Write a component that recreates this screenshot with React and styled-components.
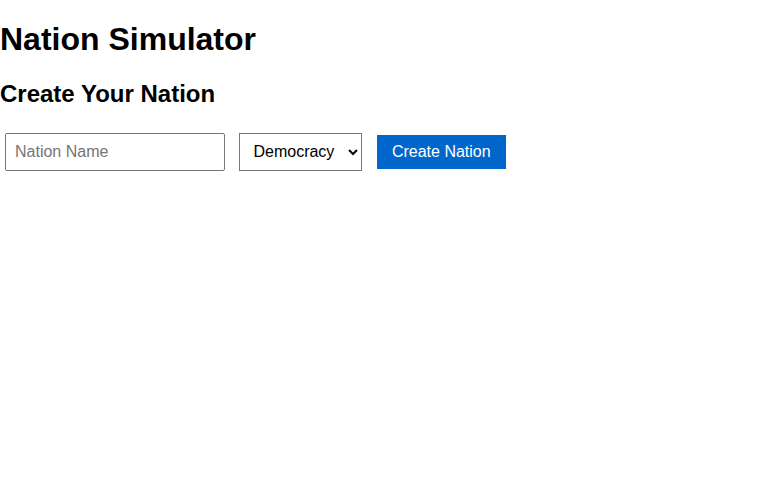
import React from "react";
import styled, { createGlobalStyle } from "styled-components";

const Global = createGlobalStyle`
  html, body { margin: 0; padding: 0; background: #fff; }
  body { font-family: "Liberation Sans", Arial, sans-serif; color: #000; font-size: 16px; }
`;

const Page = styled.div`
  font-family: "Liberation Sans", Arial, sans-serif;
  font-size: 16px;
`;

const Title = styled.h1`
  font-size: 32px;
  font-weight: bold;
  margin: 21.44px 0;
`;

const Subtitle = styled.h2`
  font-size: 24px;
  font-weight: bold;
  margin: 19.92px 0;
`;

const Form = styled.div`
  font-size: 16px;
`;

const TextInput = styled.input`
  font-family: "Liberation Sans", Arial, sans-serif;
  font-size: 16px;
  padding: 9px;
  margin: 5px;
  width: 200px;
  border: 1px solid #767676;
  border-radius: 2px;
  &::placeholder { color: #757575; }
`;

const Select = styled.select`
  font-family: "Liberation Sans", Arial, sans-serif;
  font-size: 16px;
  padding: 8.5px 7px 8.5px 9px;
  margin: 5px;
  border: 1px solid #767676;
  border-radius: 0;
  background: #fff;
  color: #000;
`;

const Button = styled.button`
  font-family: "Liberation Sans", Arial, sans-serif;
  font-size: 16px;
  padding: 8px 15px;
  margin: 5px;
  border: none;
  background: #0066cc;
  color: #fff;
  cursor: pointer;
`;

export default function App() {
  return (
    <Page>
      <Global />
      <Title>Nation Simulator</Title>
      <Subtitle>Create Your Nation</Subtitle>
      <Form>
        <TextInput placeholder="Nation Name" />{" "}
        <Select defaultValue="Democracy">
          <option>Democracy</option>
          <option>Monarchy</option>
          <option>Dictatorship</option>
        </Select>{" "}
        <Button>Create Nation</Button>
      </Form>
    </Page>
  );
}
